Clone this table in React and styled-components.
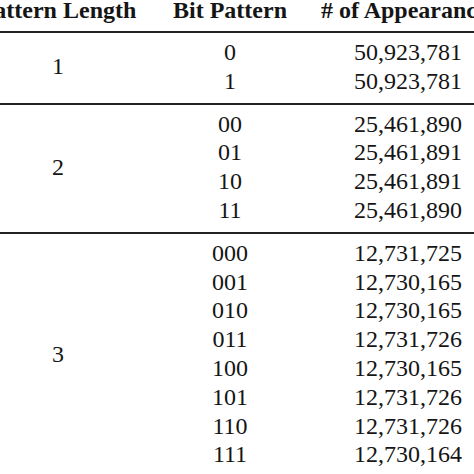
import React from "react";
import styled, { createGlobalStyle } from "styled-components";

const Global = createGlobalStyle`
  html, body { margin: 0; padding: 0; background: #fff; }
  body { width: 474px; height: 474px; overflow: hidden; }
`;

const Table = styled.div`
  width: 474px;
  font-family: "Liberation Serif", "Times New Roman", serif;
  font-size: 24px;
  color: #151515;
`;

const Header = styled.div`
  display: grid;
  grid-template-columns: 116px 228px 130px;
  line-height: 21px;
  padding-bottom: 10px;
  font-weight: bold;
  white-space: nowrap;
`;

const HeadCell = styled.div`
  display: flex;
  justify-content: center;
  min-width: 0;
`;

const Group = styled.div`
  display: flex;
  border-top: 2px solid #222;
  padding: 5px 0 7px;
`;

const LengthCell = styled.div`
  width: 116px;
  flex: none;
  display: flex;
  align-items: center;
  justify-content: center;
  line-height: 28.8px;
`;

const Rows = styled.div`
  flex: 1;
  display: flex;
  flex-direction: column;
`;

const Row = styled.div`
  display: grid;
  grid-template-columns: 228px 130px;
  line-height: 28.8px;
`;

const Bits = styled.div`
  text-align: center;
`;

const Count = styled.div`
  text-align: right;
  padding-right: 12px;
`;

const groups = [
  { len: 1, rows: [["0", "50,923,781"], ["1", "50,923,781"]] },
  {
    len: 2,
    rows: [
      ["00", "25,461,890"],
      ["01", "25,461,891"],
      ["10", "25,461,891"],
      ["11", "25,461,890"],
    ],
  },
  {
    len: 3,
    rows: [
      ["000", "12,731,725"],
      ["001", "12,730,165"],
      ["010", "12,730,165"],
      ["011", "12,731,726"],
      ["100", "12,730,165"],
      ["101", "12,731,726"],
      ["110", "12,731,726"],
      ["111", "12,730,164"],
    ],
  },
];

export default function App() {
  return (
    <>
      <Global />
      <Table>
        <Header>
          <HeadCell>Pattern Length</HeadCell>
          <HeadCell>Bit Pattern</HeadCell>
          <HeadCell># of Appearances</HeadCell>
        </Header>
        {groups.map((g) => (
          <Group key={g.len}>
            <LengthCell>{g.len}</LengthCell>
            <Rows>
              {g.rows.map(([b, c]) => (
                <Row key={b}>
                  <Bits>{b}</Bits>
                  <Count>{c}</Count>
                </Row>
              ))}
            </Rows>
          </Group>
        ))}
      </Table>
    </>
  );
}
